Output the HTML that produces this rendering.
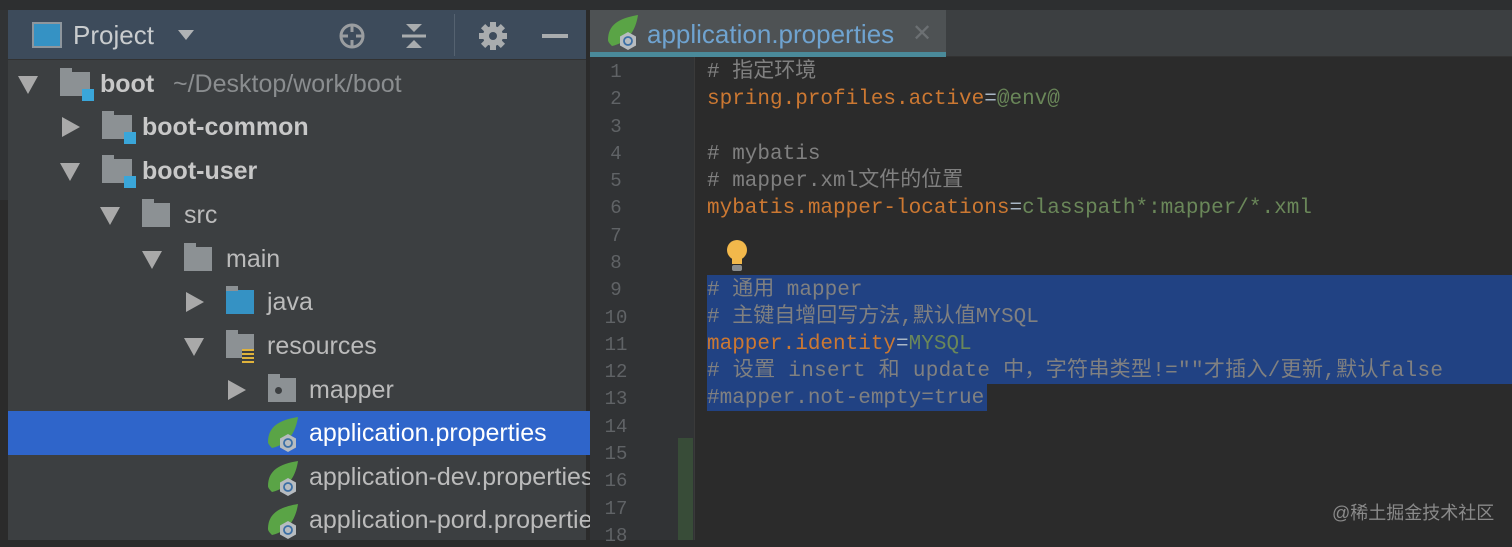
<!DOCTYPE html>
<html><head><meta charset="utf-8"><style>
*{margin:0;padding:0;box-sizing:border-box}
body{width:1512px;height:540px;overflow:hidden;background:#2b2b2b;position:relative;font-family:"Liberation Sans","Noto Sans CJK SC",sans-serif}
.abs{position:absolute}
#left{left:8px;top:10px;width:582px;height:530px;background:#3c3f41}
#hdr{left:8px;top:10px;width:582px;height:50px;background:#3d4b5b;border-bottom:1px solid #323232}
.row{position:absolute;left:0;height:44px;font-size:25px;color:#bbbbbb;white-space:nowrap;line-height:44px}
.tri{position:absolute;width:0;height:0}
.td{border-left:10px solid transparent;border-right:10px solid transparent;border-top:18px solid #a9a9a9;top:14px}
.tr{border-top:10px solid transparent;border-bottom:10px solid transparent;border-left:18px solid #a9a9a9;top:12px}
.fold{position:absolute;top:10px;width:30px;height:24px;background:#8c9194}
.fold:before{content:"";position:absolute;left:0;top:-4px;width:12px;height:5px;background:#8c9194}
.mod{position:absolute;width:12px;height:12px;background:#3aa6d9;right:-4px;bottom:-5px}
#gut{left:590px;top:57px;width:105px;height:483px;background:#313335;border-right:1px solid #3a3a3a}
.ln{position:absolute;left:584px;width:64px;text-align:center;font-family:"Liberation Mono",monospace;font-size:19px;color:#606366}
.cl{position:absolute;left:707px;font-family:"Liberation Mono","Noto Sans CJK SC",monospace;font-size:21px;white-space:pre;height:27px;line-height:27px;color:#808080}
.k{color:#cc7832}.v{color:#6a8759}.e{color:#a9b7c6}
.sel{position:absolute;background:#214283}
</style></head><body>
<div class="abs" style="left:0;top:0;width:1512px;height:10px;background:#2d2f30"></div>
<div class="abs" style="left:0;top:10px;width:8px;height:190px;background:#313335"></div>
<div class="abs" id="left"></div>
<div class="abs" id="hdr">
 <div class="abs" style="left:24px;top:12px;width:30px;height:26px;border:2px solid #8e969d;background:#3592c4"></div>
 <div class="abs" style="left:65px;top:10px;font-size:26px;color:#c9ccce">Project</div>
 <div class="abs tri" style="left:170px;top:20px;border-left:8px solid transparent;border-right:8px solid transparent;border-top:10px solid #b0b3b5"></div>
 <svg class="abs" style="left:330px;top:12px" width="28" height="28" viewBox="0 0 28 28"><circle cx="14" cy="14" r="11" fill="none" stroke="#9a9da0" stroke-width="3"/><path d="M14 3v7M14 18v7M3 14h7M18 14h7" stroke="#9a9da0" stroke-width="3"/></svg>
 <svg class="abs" style="left:392px;top:12px" width="28" height="28" viewBox="0 0 28 28"><path d="M6 2h16l-8 8z M6 26h16l-8-8z" fill="#a9acae"/><rect x="2" y="12.5" width="24" height="3" fill="#a9acae"/></svg>
 <div class="abs" style="left:446px;top:4px;width:1px;height:42px;background:#556270"></div>
 <svg class="abs" style="left:470px;top:11px" width="30" height="30" viewBox="0 0 30 30"><g fill="#a9acae"><circle cx="15" cy="15" r="10"/><rect x="12" y="1" width="6" height="28"/><rect x="1" y="12" width="28" height="6"/><rect x="12" y="1" width="6" height="28" transform="rotate(45 15 15)"/><rect x="12" y="1" width="6" height="28" transform="rotate(-45 15 15)"/></g><circle cx="15" cy="15" r="4" fill="#3d4b5b"/></svg>
 <div class="abs" style="left:534px;top:24px;width:26px;height:4px;background:#a9acae"></div>
</div>
<div class="abs" style="left:586px;top:10px;width:4px;height:530px;background:#2b2b2b"></div>

<div class="abs" style="left:8px;top:0;width:582px;height:540px;overflow:hidden">
 <div class="row" style="top:62px;width:582px"><div class="tri td" style="left:10px"></div><div class="fold" style="left:52px"><div class="mod"></div></div><b style="position:absolute;left:92px;color:#c8c8c8">boot</b><span style="position:absolute;left:165px;color:#8a8d8f">~/Desktop/work/boot</span></div>
 <div class="row" style="top:105px;width:582px"><div class="tri tr" style="left:54px"></div><div class="fold" style="left:94px"><div class="mod"></div></div><b style="position:absolute;left:134px;color:#c8c8c8">boot-common</b></div>
 <div class="row" style="top:149px;width:582px"><div class="tri td" style="left:52px"></div><div class="fold" style="left:94px"><div class="mod"></div></div><b style="position:absolute;left:134px;color:#c8c8c8">boot-user</b></div>
 <div class="row" style="top:193px;width:582px"><div class="tri td" style="left:92px"></div><div class="fold" style="left:134px;width:28px"></div><span style="position:absolute;left:176px">src</span></div>
 <div class="row" style="top:237px;width:582px"><div class="tri td" style="left:134px"></div><div class="fold" style="left:176px;width:28px"></div><span style="position:absolute;left:218px">main</span></div>
 <div class="row" style="top:280px;width:582px"><div class="tri tr" style="left:178px"></div><div class="fold" style="left:218px;width:28px;background:#3592c4"></div><span style="position:absolute;left:259px">java</span></div>
 <div class="row" style="top:324px;width:582px"><div class="tri td" style="left:176px"></div><div class="fold" style="left:218px;width:28px"></div><div class="abs" style="left:234px;top:25px;width:12px;height:16px;background:repeating-linear-gradient(#e0b33b 0 2px,#3c3f41 2px 4px)"></div><span style="position:absolute;left:259px">resources</span></div>
 <div class="row" style="top:368px;width:582px"><div class="tri tr" style="left:220px"></div><div class="fold" style="left:260px;width:28px"><div class="abs" style="left:7px;top:9px;width:7px;height:7px;border-radius:50%;background:#3c3f41"></div></div><span style="position:absolute;left:301px">mapper</span></div>
 <div class="row" style="top:411px;width:582px;background:#2f65ca;color:#fff"><span style="position:absolute;left:301px">application.properties</span></div>
 <div class="row" style="top:455px;width:582px"><span style="position:absolute;left:301px">application-dev.properties</span></div>
 <div class="row" style="top:498px;width:582px"><span style="position:absolute;left:301px">application-pord.properties</span></div>
</div>
<svg class="abs" style="left:266px;top:416px" width="36" height="124" viewBox="0 0 36 124">
 <defs><g id="sp"><path d="M2 26C2 10 14 4 32 1C30 14 24 28 6 32C4 30 2 28 2 26z" fill="#5aa446"/><polygon points="22,18 30,22.5 30,31.5 22,36 14,31.5 14,22.5" fill="#b7bcc0"/><circle cx="22" cy="27" r="4" fill="none" stroke="#3b6fa5" stroke-width="1.8"/></g></defs>
 <use href="#sp"/><use href="#sp" y="44"/><use href="#sp" y="87"/>
</svg>

<div class="abs" style="left:590px;top:10px;width:922px;height:47px;background:#3c3f41;border-bottom:1px solid #323232"></div>
<div class="abs" style="left:590px;top:10px;width:356px;height:47px;background:#4e5254"></div>
<div class="abs" style="left:590px;top:52px;width:356px;height:5px;background:#4a8a9a"></div>
<svg class="abs" style="left:606px;top:14px" width="36" height="40" viewBox="0 0 36 40"><path d="M2 26C2 10 14 4 32 1C30 14 24 28 6 32C4 30 2 28 2 26z" fill="#5aa446"/><polygon points="22,18 30,22.5 30,31.5 22,36 14,31.5 14,22.5" fill="#b7bcc0"/><circle cx="22" cy="27" r="4" fill="none" stroke="#3b6fa5" stroke-width="1.8"/></svg>
<div class="abs" style="left:647px;top:19px;font-size:26px;color:#6fa3d0">application.properties</div>
<div class="abs" style="left:912px;top:19px;font-size:24px;color:#6c7073">✕</div>
<div class="abs" id="gut"></div>
<div class="abs" style="left:678px;top:438px;width:15px;height:102px;background:#384c38"></div>

<div class="sel" style="left:707px;top:275px;width:805px;height:109px"></div>
<div class="sel" style="left:707px;top:384px;width:280px;height:27px"></div>

<div class="ln" style="top:61px">1</div><div class="ln" style="top:88px">2</div><div class="ln" style="top:116px">3</div><div class="ln" style="top:143px">4</div><div class="ln" style="top:170px">5</div><div class="ln" style="top:197px">6</div><div class="ln" style="top:225px">7</div><div class="ln" style="top:252px">8</div><div class="ln" style="top:279px">9</div><div class="ln" style="top:307px">10</div><div class="ln" style="top:334px">11</div><div class="ln" style="top:361px">12</div><div class="ln" style="top:388px">13</div><div class="ln" style="top:416px">14</div><div class="ln" style="top:443px">15</div><div class="ln" style="top:470px">16</div><div class="ln" style="top:498px">17</div><div class="ln" style="top:525px">18</div>

<div class="cl" style="top:59px"># 指定环境</div>
<div class="cl" style="top:86px"><span class="k">spring.profiles.active</span><span class="e">=</span><span class="v">@env@</span></div>
<div class="cl" style="top:141px"># mybatis</div>
<div class="cl" style="top:168px"># mapper.xml文件的位置</div>
<div class="cl" style="top:195px"><span class="k">mybatis.mapper-locations</span><span class="e">=</span><span class="v">classpath*:mapper/*.xml</span></div>
<svg class="abs" style="left:724px;top:238px" width="26" height="36" viewBox="0 0 26 36"><circle cx="13" cy="12" r="10" fill="#f2b84b"/><rect x="8" y="20" width="10" height="6" fill="#f2b84b"/><rect x="8" y="27" width="10" height="6" rx="2" fill="#8a8d8f"/></svg>
<div class="cl" style="top:277px"># 通用 mapper</div>
<div class="cl" style="top:304px"># 主键自增回写方法,默认值MYSQL</div>
<div class="cl" style="top:331px"><span class="k">mapper.identity</span><span class="e">=</span><span class="v">MYSQL</span></div>
<div class="cl" style="top:358px;letter-spacing:0.3px"># 设置 insert 和 update 中，字符串类型!=""才插入/更新,默认false</div>
<div class="cl" style="top:385px">#mapper.not-empty=true</div>
<div class="abs" style="left:1332px;top:499px;font-size:18px;color:#8a8a8a">@稀土掘金技术社区</div>
</body></html>
